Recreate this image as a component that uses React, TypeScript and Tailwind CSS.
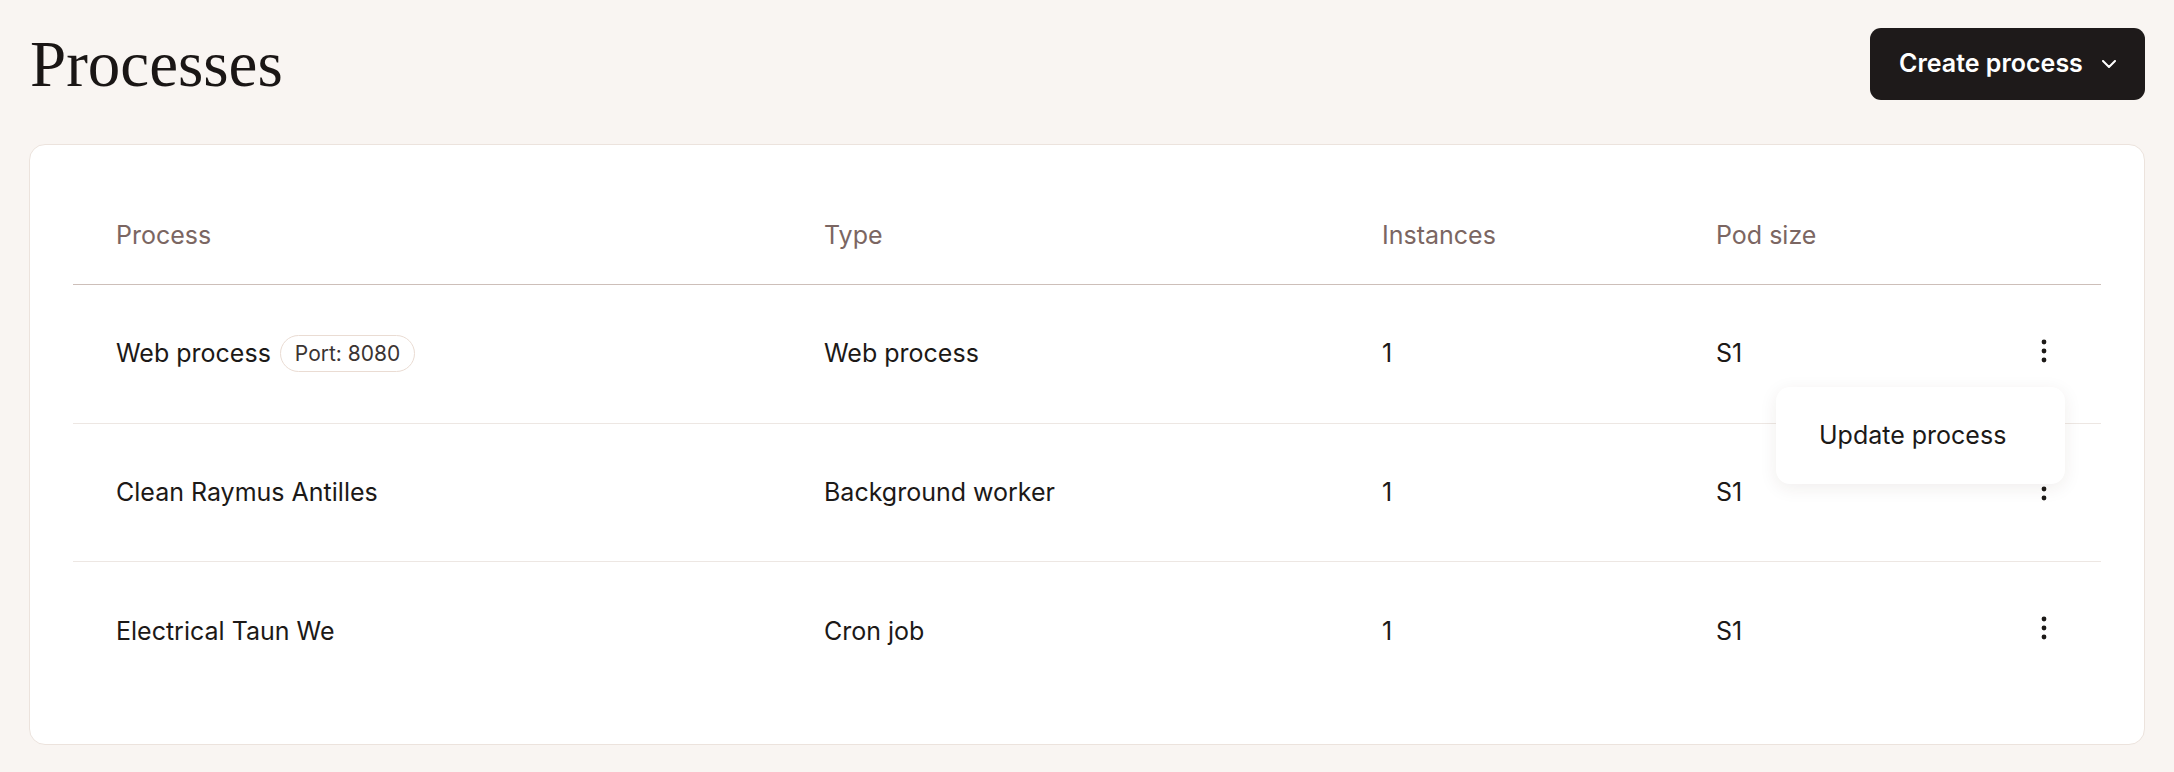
import React from "react";

type Row = {
  name: string;
  port?: number;
  type: string;
  instances: number;
  size: string;
};

const rows: Row[] = [
  { name: "Web process", port: 8080, type: "Web process", instances: 1, size: "S1" },
  { name: "Clean Raymus Antilles", type: "Background worker", instances: 1, size: "S1" },
  { name: "Electrical Taun We", type: "Cron job", instances: 1, size: "S1" },
];

const cols = "grid grid-cols-[708px_558px_334px_1fr_100px]";

function Kebab() {
  return (
    <svg width="8" height="26" viewBox="0 0 8 26" className="-translate-y-[3px]">
      <circle cx="4" cy="4" r="2.4" fill="#1c1917" />
      <circle cx="4" cy="13" r="2.4" fill="#1c1917" />
      <circle cx="4" cy="22" r="2.4" fill="#1c1917" />
    </svg>
  );
}

export default function App() {
  return (
    <div className="min-h-screen bg-[#f9f5f2] px-[29px] pt-[28px] font-['Inter','Noto_Sans',sans-serif] text-[#1c1917]">
      {/* page header */}
      <div className="flex h-[72px] items-center justify-between">
        <h1 className="pl-[1px] font-['Liberation_Serif',serif] text-[65px] leading-none text-[#1a1615]">
          Processes
        </h1>
        <button className="flex h-[72px] w-[275px] items-center justify-between rounded-[11px] bg-[#1e1a1a] pl-[29px] pr-[29px] text-[25px] font-semibold text-white">
          <span>Create process</span>
          <svg width="14" height="8" viewBox="0 0 14 8" fill="none">
            <path d="M1 1l6 6 6-6" stroke="white" strokeWidth="2" strokeLinecap="round" strokeLinejoin="round" />
          </svg>
        </button>
      </div>

      {/* table card */}
      <div className="relative mt-[44px] rounded-[16px] border border-[#ece3dd] bg-white px-[43px] pt-[42px] pb-[43px]">
        <div className={`${cols} h-[98px] items-center border-b border-[#cdbfb9] text-[25px] text-[#7b6662]`}>
          <div className="px-[43px]">Process</div>
          <div className="px-[43px]">Type</div>
          <div className="px-[43px]">Instances</div>
          <div className="px-[43px]">Pod size</div>
          <div />
        </div>

        {rows.map((row, i) => (
          <div
            key={row.name}
            className={`${cols} h-[138.5px] items-center text-[25px] ${i < rows.length - 1 ? "border-b border-[#ede7e3]" : ""}`}
          >
            <div className="flex items-center gap-[9px] px-[43px]">
              <span>{row.name}</span>
              {row.port && (
                <span className="flex h-[37px] items-center rounded-full border border-[#eadcd3] px-[14px] text-[21px] text-[#3b3432]">
                  Port: {row.port}
                </span>
              )}
            </div>
            <div className="px-[43px]">{row.type}</div>
            <div className="px-[43px]">{row.instances}</div>
            <div className="px-[43px]">{row.size}</div>
            <div className="flex justify-end pr-[53px]">
              <Kebab />
            </div>
          </div>
        ))}

        {/* open row menu */}
        <div className="absolute top-[242px] right-[79px] flex h-[97px] w-[289px] items-center rounded-[14px] bg-white px-[43px] text-[25px] shadow-[0_4px_18px_rgba(60,40,30,0.08)]">
          Update process
        </div>
      </div>
    </div>
  );
}
